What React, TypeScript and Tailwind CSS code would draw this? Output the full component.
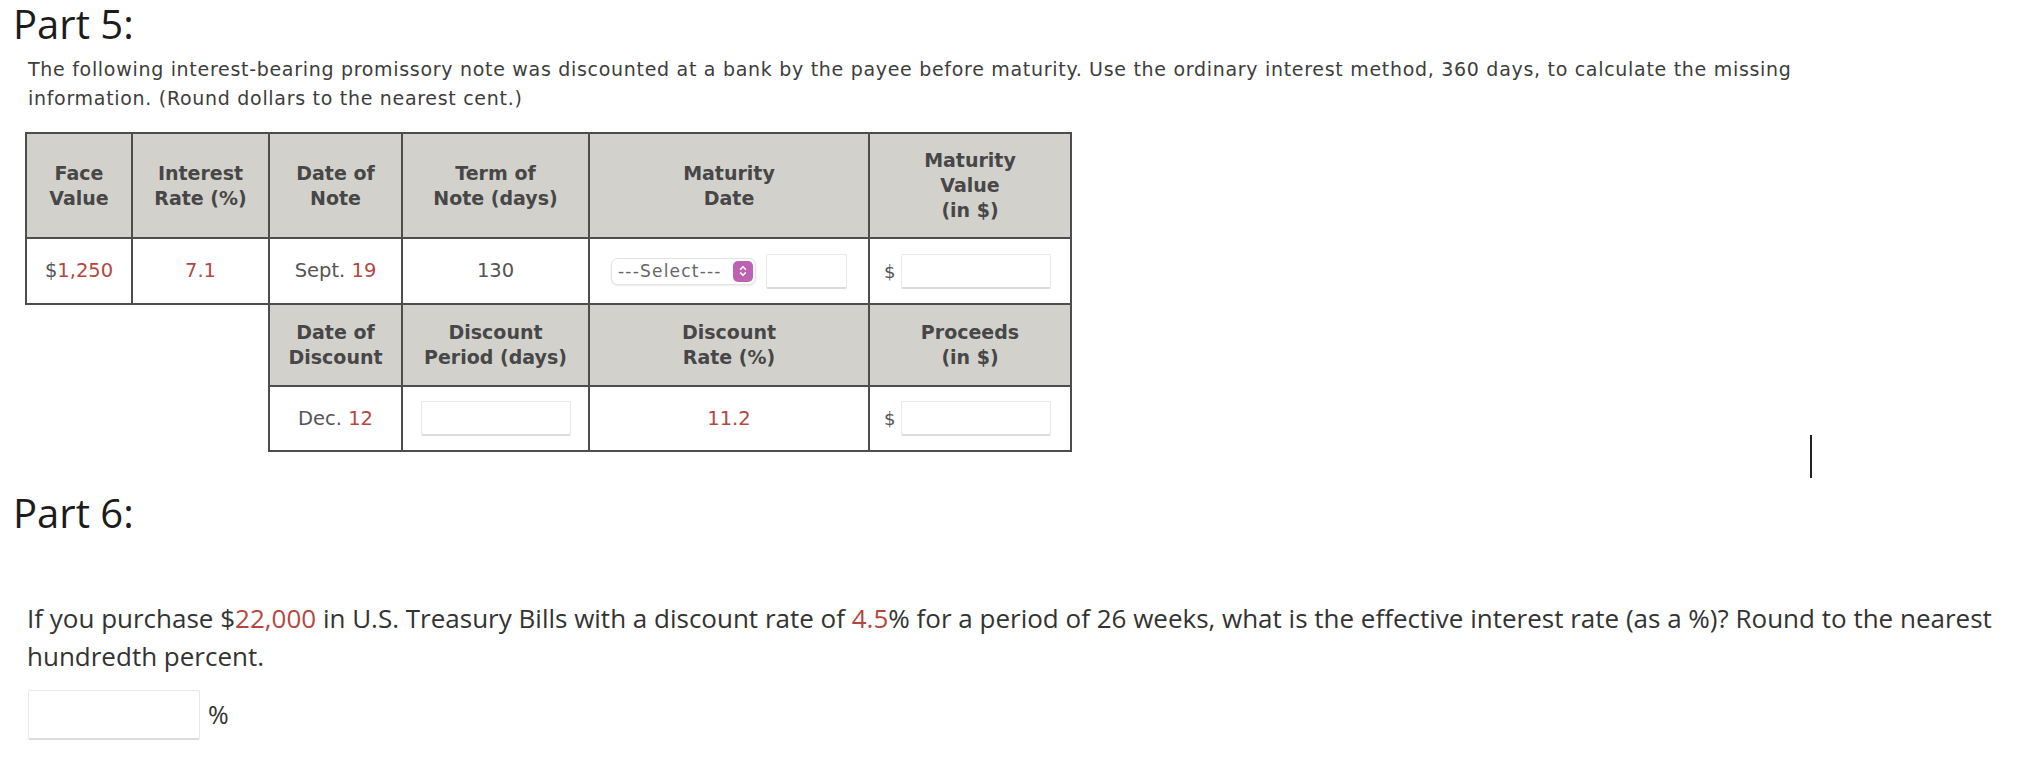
import React from 'react';

const Red: React.FC<{ children: React.ReactNode }> = ({ children }) => (
  <span className="text-[#b5473f]">{children}</span>
);

const Box: React.FC<{ className: string }> = ({ className }) => (
  <input
    type="text"
    className={`bg-white border border-[#e9e9e9] border-b-2 border-b-[#dcdcdc] rounded-[2px] outline-none ${className}`}
  />
);

const SelectBox: React.FC = () => (
  <div className="flex items-center justify-between w-[145px] h-[27px] rounded-[7px] border border-[#e3e3e3] bg-white shadow-[0_1px_2px_rgba(0,0,0,0.08)] pl-[6px] pr-[2px]">
    <span className="text-[17px] tracking-[1.2px] leading-none text-[#666]">---Select---</span>
    <span className="w-[20px] h-[21px] rounded-[5px] bg-[#bd62b1] flex items-center justify-center">
      <svg width="10" height="14" viewBox="0 0 10 14">
        <path d="M2.2 5.6 5 2.8 7.8 5.6 M2.2 8.4 5 11.2 7.8 8.4" stroke="white" strokeWidth="1.6" fill="none" />
      </svg>
    </span>
  </div>
);

const head = 'border-2 border-[#4d4d4d] bg-[#d3d1cc] text-center align-middle font-bold text-[19px] leading-[25px] text-[#474747]';
const cell = 'border-2 border-[#4d4d4d] bg-white text-center align-middle text-[19.5px] text-[#555]';

export default function App() {
  return (
    <div className="relative min-h-screen bg-white font-['DejaVu_Sans',Verdana,sans-serif]">
      {/* Part 5 */}
      <div className="pl-[13px] font-['Open_Sans',sans-serif] text-[40px] leading-[48px] text-[#1c1c1c]">Part 5:</div>
      <p className="mt-[7px] pl-[28px] max-w-[1830px] text-[19px] tracking-[0.7px] leading-[29px] text-[#3d3d3d]">
        The following interest-bearing promissory note was discounted at a bank by the payee before maturity. Use the ordinary interest method, 360 days, to calculate the missing information. (Round dollars to the nearest cent.)
      </p>

      <table className="mt-[19px] ml-[25px] border-collapse table-fixed w-[1047px]">
        <colgroup>
          <col className="w-[106px]" />
          <col className="w-[137px]" />
          <col className="w-[133px]" />
          <col className="w-[187px]" />
          <col className="w-[280px]" />
          <col className="w-[202px]" />
        </colgroup>
        <tbody>
          <tr className="h-[105px]">
            <td className={head}>Face<br />Value</td>
            <td className={head}>Interest<br />Rate (%)</td>
            <td className={head}>Date of<br />Note</td>
            <td className={head}>Term of<br />Note (days)</td>
            <td className={head}>Maturity<br />Date</td>
            <td className={head}>Maturity<br />Value<br />(in $)</td>
          </tr>
          <tr className="h-[66px]">
            <td className={cell}>$<Red>1,250</Red></td>
            <td className={cell}><Red>7.1</Red></td>
            <td className={cell}>Sept. <Red>19</Red></td>
            <td className={cell}>130</td>
            <td className={cell}>
              <div className="flex items-center justify-center gap-[10px]">
                <SelectBox />
                <Box className="w-[81px] h-[35px]" />
              </div>
            </td>
            <td className={cell}>
              <div className="flex items-center pl-[14px] gap-[6px]">
                <span className="text-[18px]">$</span>
                <Box className="w-[150px] h-[35px]" />
              </div>
            </td>
          </tr>
          <tr className="h-[82px]">
            <td className="border-0" />
            <td className="border-0" />
            <td className={head}>Date of<br />Discount</td>
            <td className={head}>Discount<br />Period (days)</td>
            <td className={head}>Discount<br />Rate (%)</td>
            <td className={head}>Proceeds<br />(in $)</td>
          </tr>
          <tr className="h-[65px]">
            <td className="border-0" />
            <td className="border-0" />
            <td className={cell}>Dec. <Red>12</Red></td>
            <td className={cell}>
              <div className="flex items-center justify-center">
                <Box className="w-[150px] h-[35px]" />
              </div>
            </td>
            <td className={cell}><Red>11.2</Red></td>
            <td className={cell}>
              <div className="flex items-center pl-[14px] gap-[6px]">
                <span className="text-[18px]">$</span>
                <Box className="w-[150px] h-[35px]" />
              </div>
            </td>
          </tr>
        </tbody>
      </table>

      {/* Part 6 */}
      <div className="mt-[37px] pl-[13px] font-['Open_Sans',sans-serif] text-[40px] leading-[48px] text-[#1c1c1c]">Part 6:</div>
      <p className="mt-[62px] pl-[27px] pr-[10px] font-['Open_Sans',sans-serif] text-[26px] leading-[38px] text-[#333]">
        If you purchase $<Red>22,000</Red> in U.S. Treasury Bills with a discount rate of <Red>4.5</Red>% for a period of 26 weeks, what is the effective interest rate (as a %)? Round to the nearest hundredth percent.
      </p>
      <div className="mt-[15px] pl-[28px] flex items-center gap-[8px] font-['Open_Sans',sans-serif]">
        <Box className="w-[172px] h-[50px]" />
        <span className="text-[25px] text-[#333]">%</span>
      </div>

      {/* text cursor */}
      <div className="absolute left-[1810px] top-[435px] w-[2px] h-[43px] bg-[#222]" />
    </div>
  );
}
